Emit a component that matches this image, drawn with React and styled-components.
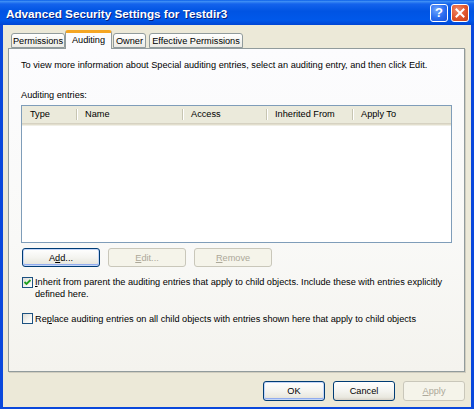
import React from 'react';
import styled, { createGlobalStyle } from 'styled-components';

const GlobalStyle = createGlobalStyle`
  html, body {
    margin: 0;
    padding: 0;
    background: #ffffff;
  }
  body {
    font-family: "Liberation Sans", Arial, sans-serif;
    font-size: 9.2px;
    color: #000;
  }
`;

const Window = styled.div`
  width: 474px;
  height: 409px;
  display: flex;
  flex-direction: column;
  background: #0a48dc;
  overflow: hidden;
`;

const TitleBar = styled.div`
  height: 25px;
  flex: none;
  display: flex;
  align-items: center;
  justify-content: space-between;
  padding: 0 5px 0 6px;
  box-sizing: border-box;
  background: linear-gradient(
    to bottom,
    #0a5ee8 0%,
    #3c8cf4 6%,
    #1463ec 16%,
    #0054e3 45%,
    #0058ea 80%,
    #0046d4 100%
  );
`;

const Title = styled.div`
  color: #fff;
  font-family: "Liberation Sans", Arial, sans-serif;
  font-weight: bold;
  font-size: 11.7px;
  text-shadow: 1px 1px 0 #0a1f7a;
  margin-top: 1px;
`;

const Controls = styled.div`
  display: flex;
  gap: 3px;
`;

const CaptionButton = styled.div`
  width: 18px;
  height: 18px;
  box-sizing: border-box;
  border: 1px solid #fff;
  border-radius: 3px;
  display: flex;
  align-items: center;
  justify-content: center;
  background: ${p => p.$close
    ? 'radial-gradient(circle at 35% 30%, #f08a6a 0%, #e0542a 55%, #c4401a 100%)'
    : 'radial-gradient(circle at 35% 30%, #6fa6ff 0%, #2a6cf0 55%, #1a52d8 100%)'};
  color: #fff;
  font-weight: bold;
  font-size: 13px;
  line-height: 1;
`;

const Body = styled.div`
  flex: 1;
  margin: 0 3px 3px;
  background: #ece9d8;
  display: flex;
  flex-direction: column;
  padding: 5px 6px 6px 5px;
  box-sizing: border-box;
`;

const TabStrip = styled.div`
  height: 18px;
  display: flex;
  align-items: flex-end;
  padding-left: 3px;
  position: relative;
  z-index: 1;
`;

const Tab = styled.div`
  box-sizing: border-box;
  width: ${p => p.$w}px;
  height: ${p => (p.$active ? 19 : 15)}px;
  margin: ${p => (p.$active ? '0 -1px -1px -1px' : `0 1px 0 ${p.$gap || 0}px`)};
  border: 1px solid #919b9c;
  border-bottom: ${p => (p.$active ? 'none' : '1px solid #919b9c')};
  border-top: ${p => (p.$active ? '3px solid #f5a623' : '1px solid #919b9c')};
  border-radius: 3px 3px 0 0;
  background: ${p => (p.$active
    ? '#fcfcfe'
    : 'linear-gradient(to bottom, #ffffff 0%, #f3f3ef 60%, #ecebe5 100%)')};
  display: flex;
  align-items: center;
  justify-content: center;
  white-space: nowrap;
  padding-bottom: ${p => (p.$active ? 3 : 0)}px;
  position: relative;
  z-index: ${p => (p.$active ? 2 : 1)};
`;

const Panel = styled.div`
  height: 324px;
  box-sizing: border-box;
  border: 1px solid #919b9c;
  background: linear-gradient(to bottom, #fcfcfe 0%, #f9f9f7 60%, #f4f3ee 100%);
  box-shadow: 1px 1px 0 #d0cdbf;
  padding: 11px 12px 0 12px;
  display: flex;
  flex-direction: column;
`;

const Text = styled.div`
  line-height: 11px;
  margin-top: ${p => p.$mt || 0}px;
  white-space: nowrap;
`;

const ListBox = styled.div`
  margin-top: 4px;
  height: 138px;
  box-sizing: border-box;
  border: 1px solid #7f9db9;
  background: #fff;
`;

const Header = styled.div`
  display: flex;
  height: 17px;
  background: #ebeadb;
  border-bottom: 1px solid #d6d2c2;
  box-shadow: 0 1px 0 #e2decd, 0 2px 0 #f0efe6;
`;

const HeaderCell = styled.div`
  box-sizing: border-box;
  width: ${p => (p.$w ? `${p.$w}px` : 'auto')};
  flex: ${p => (p.$w ? 'none' : 1)};
  padding-left: 8px;
  display: flex;
  align-items: center;
  position: relative;
  line-height: 11px;
  &::after {
    content: '';
    display: ${p => (p.$w ? 'block' : 'none')};
    position: absolute;
    right: 0;
    top: 3px;
    bottom: 3px;
    width: 1px;
    background: #c7c5b2;
    box-shadow: 1px 0 0 #fff;
  }
`;

const Row = styled.div`
  display: flex;
  gap: 8px;
  margin-top: ${p => p.$mt || 0}px;
  margin-left: 1px;
`;

const Button = styled.div`
  box-sizing: border-box;
  width: ${p => p.$w}px;
  height: ${p => p.$h || 19}px;
  border: 1px solid ${p => (p.$disabled ? '#c9c7ba' : '#003c74')};
  border-radius: 3px;
  display: flex;
  align-items: center;
  justify-content: center;
  white-space: pre;
  color: ${p => (p.$disabled ? '#aca899' : '#000')};
  background: ${p => (p.$disabled
    ? '#f5f4ea'
    : 'linear-gradient(to bottom, #ffffff 0%, #f4f4f0 50%, #e9e8df 85%, #d6d0c5 100%)')};
  box-shadow: ${p => (p.$focus
    ? 'inset 0 0 0 1px #c3d6f8, inset 0 -1px 0 1px #91acee'
    : 'none')};
`;

const CheckRow = styled.div`
  display: flex;
  align-items: flex-start;
  gap: 2px;
  margin-top: ${p => p.$mt || 0}px;
  margin-left: 1px;
`;

const Box = styled.div`
  flex: none;
  width: 11px;
  height: 11px;
  box-sizing: border-box;
  border: 1px solid #1c5180;
  background: linear-gradient(135deg, #dcdcd7 0%, #f5f5f2 60%, #ffffff 100%);
  margin-top: ${p => p.$mt || 0}px;
  display: flex;
  align-items: center;
  justify-content: center;
`;

const Label = styled.div`
  line-height: 12px;
  white-space: nowrap;
`;

const Footer = styled.div`
  display: flex;
  justify-content: flex-end;
  gap: 8px;
  margin-top: 9px;
`;

export default function App() {
  return (
    <>
      <GlobalStyle />
      <Window>
        <TitleBar>
          <Title>Advanced Security Settings for Testdir3</Title>
          <Controls>
            <CaptionButton>?</CaptionButton>
            <CaptionButton $close>
              <svg width="10" height="10" viewBox="0 0 10 10">
                <path d="M1.5 1.5 L8.5 8.5 M8.5 1.5 L1.5 8.5" stroke="#fff" strokeWidth="2" strokeLinecap="square" />
              </svg>
            </CaptionButton>
          </Controls>
        </TitleBar>
        <Body>
          <TabStrip>
            <Tab $w={54}>Permissions</Tab>
            <Tab $w={47} $active>Auditing</Tab>
            <Tab $w={33} $gap={2}>Owner</Tab>
            <Tab $w={94} $gap={2}>Effective Permissions</Tab>
          </TabStrip>
          <Panel>
            <Text>To view more information about Special auditing entries, select an auditing entry, and then click Edit.</Text>
            <Text $mt={19}>Auditing entries:</Text>
            <ListBox>
              <Header>
                <HeaderCell $w={55}>Type</HeaderCell>
                <HeaderCell $w={106}>Name</HeaderCell>
                <HeaderCell $w={84}>Access</HeaderCell>
                <HeaderCell $w={86}>Inherited From</HeaderCell>
                <HeaderCell>Apply To</HeaderCell>
              </Header>
            </ListBox>
            <Row $mt={5}>
              <Button $w={78} $focus>A<u>d</u>d...</Button>
              <Button $w={78} $disabled><u>E</u>dit...</Button>
              <Button $w={78} $disabled><u>R</u>emove</Button>
            </Row>
            <CheckRow $mt={9}>
              <Box $mt={1}>
                <svg width="9" height="9" viewBox="0 0 9 9">
                  <path d="M1.5 4 L3.5 6 L7.5 2" stroke="#21a121" strokeWidth="1.8" fill="none" />
                </svg>
              </Box>
              <div>
                <Label><u>I</u>nherit from parent the auditing entries that apply to child objects. Include these with entries explicitly</Label>
                <Label>defined here.</Label>
              </div>
            </CheckRow>
            <CheckRow $mt={13}>
              <Box />
              <Label>Re<u>p</u>lace auditing entries on all child objects with entries shown here that apply to child objects</Label>
            </CheckRow>
          </Panel>
          <Footer>
            <Button $w={62} $h={20} $focus>OK</Button>
            <Button $w={62} $h={20}>Cancel</Button>
            <Button $w={62} $h={20} $disabled><u>A</u>pply</Button>
          </Footer>
        </Body>
      </Window>
    </>
  );
}
